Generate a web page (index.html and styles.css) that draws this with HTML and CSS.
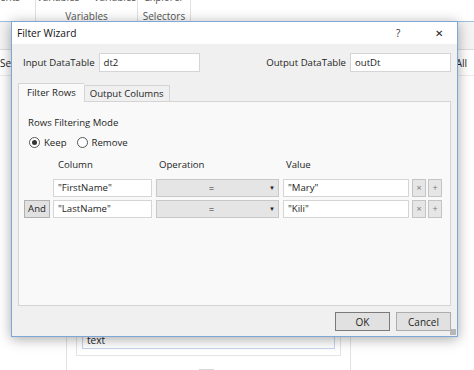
FILE: index.html
```html
<!DOCTYPE html>
<html lang="en">
<head>
    <meta charset="UTF-8">
    <title>Filter Wizard</title>
    <link rel="stylesheet" href="styles.css">
</head>
<body>
    <div class="app">
        <div class="ribbon">
            <div class="group g1"><span class="cut">ents</span></div>
            <div class="group g2">
                <div class="pair"><span class="cut">Variables</span><span class="cut">Variables</span></div>
                <span>Variables</span>
            </div>
            <div class="group g3">
                <span class="cut">Explorer</span>
                <span>Selectors</span>
            </div>
            <div class="group g4"></div>
        </div>
        <div class="toolbar"></div>
        <div class="subbar">
            <span>Se</span>
            <span>All</span>
        </div>
        <div class="main">
            <div class="side"></div>
            <div class="content">
                <div class="prop-box">
                    <div class="prop-input">text</div>
                </div>
                <div class="scroll-thumb"></div>
            </div>
            <div class="side-right"></div>
        </div>
    </div>

    <div class="dialog">
        <div class="titlebar">
            <span class="title">Filter Wizard</span>
            <span class="help">?</span>
            <span class="close">&#x2715;</span>
        </div>
        <div class="dialog-body">
            <div class="tables">
                <div class="field">
                    <label>Input DataTable</label>
                    <div class="textbox">dt2</div>
                </div>
                <div class="field">
                    <label>Output DataTable</label>
                    <div class="textbox">outDt</div>
                </div>
            </div>

            <div class="tabs">
                <div class="tab active">Filter Rows</div>
                <div class="tab">Output Columns</div>
            </div>
            <div class="tab-panel">
                <div class="mode-title">Rows Filtering Mode</div>
                <div class="radios">
                    <span class="radio checked"></span><span class="radio-label">Keep</span>
                    <span class="radio"></span><span class="radio-label">Remove</span>
                </div>

                <div class="row head">
                    <div class="c-and"></div>
                    <div class="c-col">Column</div>
                    <div class="c-op">Operation</div>
                    <div class="c-val">Value</div>
                </div>
                <div class="row">
                    <div class="c-and"></div>
                    <div class="c-col textbox">"FirstName"</div>
                    <div class="c-op combo"><span>=</span><span class="arrow">&#9660;</span></div>
                    <div class="c-val textbox">"Mary"</div>
                    <div class="mini">&#xd7;</div>
                    <div class="mini">+</div>
                </div>
                <div class="row">
                    <div class="c-and btn-and">And</div>
                    <div class="c-col textbox">"LastName"</div>
                    <div class="c-op combo"><span>=</span><span class="arrow">&#9660;</span></div>
                    <div class="c-val textbox">"Kili"</div>
                    <div class="mini">&#xd7;</div>
                    <div class="mini">+</div>
                </div>
            </div>

            <div class="actions">
                <button class="default">OK</button>
                <button>Cancel</button>
                <span class="grip"></span>
            </div>
        </div>
    </div>
</body>
</html>
```

FILE: styles.css
```css
body {
    margin: 0;
    width: 474px;
    height: 370px;
    overflow: hidden;
    position: relative;
    background: #ffffff;
    font-family: "Open Sans", "Noto Sans", sans-serif;
    font-size: 9.6px;
    color: #1e1e1e;
}

/* background application */
.app {
    display: flex;
    flex-direction: column;
    height: 370px;
}

.ribbon {
    display: flex;
    flex-shrink: 0;
    height: 21px;
    border-bottom: 1px solid #9fc0e0;
    color: #555;
    font-size: 10px;
}

.group {
    display: flex;
    flex-direction: column;
    align-items: center;
    border-right: 1px solid #e0e0e0;
    line-height: 14px;
}

.cut {
    margin-top: -10px;
}

.group > span:last-child {
    margin-top: 5px;
}

.group > .cut:last-child {
    margin-top: -10px;
}

.g1 { width: 35px; align-items: flex-start; }
.g2 { width: 101px; }
.g2 .pair { display: flex; gap: 14px; }
.g3 { width: 52px; }
.g4 { flex: 1; border-right: none; }

.toolbar {
    flex-shrink: 0;
    height: 27px;
    background: #f4f4f4;
    border-bottom: 1px solid #dcdcdc;
}

.subbar {
    flex-shrink: 0;
    height: 25px;
    display: flex;
    justify-content: space-between;
    align-items: center;
    padding-right: 7px;
    border-bottom: 1px solid #ececec;
    font-size: 10px;
}

.main {
    flex: 1;
    min-height: 0;
    display: flex;
    overflow: hidden;
}

.side {
    width: 66px;
    border-right: 1px solid #e2e2e2;
}

.content {
    width: 283px;
}

.prop-box {
    margin: 225px 9px 0 9px;
    height: 48px;
    border: 1px solid #e4e4e4;
    border-top: none;
    padding: 0 5px 6px 5px;
    display: flex;
    flex-direction: column;
    justify-content: flex-end;
}

.prop-input {
    height: 16px;
    border: 1px solid #c5d5ee;
    background: #fff;
    padding-left: 4px;
    line-height: 16px;
    font-size: 10px;
}

.scroll-thumb {
    width: 15px;
    height: 4px;
    background: #d6d6d6;
    margin: 13px 0 0 132px;
}

.side-right {
    border-left: 1px solid #e2e2e2;
    flex: 1;
}

/* dialog window */
.dialog {
    position: absolute;
    left: 11px;
    top: 21px;
    width: 445px;
    height: 314px;
    border: 1px solid #7ea6d6;
    background: #f0f0f0;
    box-shadow: 0 2px 12px rgba(0, 0, 0, 0.35);
    display: flex;
    flex-direction: column;
}

.titlebar {
    height: 23px;
    background: #ffffff;
    display: flex;
    align-items: center;
    padding-left: 5px;
    font-size: 10.2px;
    color: #111;
}

.title {
    flex: 1;
}

.help {
    width: 12px;
    margin-right: 27px;
    font-size: 10px;
    color: #333;
}

.close {
    width: 12px;
    margin-right: 10px;
    font-size: 10px;
    color: #222;
}

.dialog-body {
    flex: 1;
    display: flex;
    flex-direction: column;
    padding: 9px 6px 5px 6px;
}

.tables {
    display: flex;
    justify-content: space-between;
    padding-left: 5px;
}

.field {
    display: flex;
    align-items: center;
}

.field label {
    margin-right: 4px;
    font-size: 9.6px;
}

.textbox {
    box-sizing: border-box;
    height: 19px;
    background: #ffffff;
    border: 1px solid #d5d5d5;
    padding-left: 4px;
    line-height: 17px;
}

.tables .textbox {
    width: 101px;
}

.tabs {
    display: flex;
    align-items: flex-end;
    margin-top: 11px;
    height: 18px;
}

.tab {
    box-sizing: border-box;
    height: 16px;
    padding: 0 5px;
    border: 1px solid #d4d4d4;
    border-bottom: none;
    background: #f0f0f0;
    line-height: 15px;
}

.tab.active {
    height: 19px;
    margin-bottom: -1px;
    padding: 0 8px;
    background: #f9f9f9;
    border-right: none;
    position: relative;
    line-height: 17px;
}

.tab-panel {
    box-sizing: border-box;
    height: 205px;
    background: #f9f9f9;
    border: 1px solid #d4d4d4;
    padding: 14px 0 0 5px;
}

.mode-title {
    padding-left: 4px;
    line-height: 14px;
}

.radios {
    display: flex;
    align-items: center;
    margin-top: 5px;
    padding-left: 5px;
    height: 15px;
}

.radio {
    box-sizing: border-box;
    width: 11px;
    height: 11px;
    border: 1px solid #555;
    border-radius: 50%;
    background: #fff;
    margin-right: 4px;
    position: relative;
}

.radio.checked::after {
    content: "";
    position: absolute;
    left: 2px;
    top: 2px;
    width: 5px;
    height: 5px;
    border-radius: 50%;
    background: #333;
}

.radio-label {
    margin-right: 10px;
}

.row {
    display: flex;
    align-items: center;
    height: 18px;
    margin-bottom: 3px;
}

.row.head {
    margin-top: 8px;
    height: 14px;
    margin-bottom: 7px;
}

.c-and {
    box-sizing: border-box;
    width: 26px;
    height: 18px;
    margin-right: 3px;
}

.btn-and {
    background: #e1e1e1;
    border: 1px solid #b0b0b0;
    text-align: center;
    line-height: 16px;
}

.c-col {
    width: 99px;
    height: 18px;
    margin-right: 4px;
}

.c-op {
    box-sizing: border-box;
    width: 123px;
    height: 18px;
    margin-right: 4px;
}

.c-val {
    width: 126px;
    height: 18px;
    margin-right: 3px;
}

.head .c-col { padding-left: 5px; }
.head .c-op { padding-left: 3px; }
.head .c-val { padding-left: 3px; }
.head div { height: 14px; line-height: 14px; box-sizing: border-box; }

.row .textbox {
    line-height: 16px;
}

.combo {
    background: #e5e5e5;
    border: 1px solid #c8c8c8;
    display: flex;
    align-items: center;
    justify-content: center;
    padding-right: 12px;
    position: relative;
    color: #333;
}

.arrow {
    position: absolute;
    right: 3px;
    font-size: 6px;
    color: #222;
}

.mini {
    box-sizing: border-box;
    width: 14px;
    height: 18px;
    margin-right: 2px;
    background: #e6e6e6;
    border: 1px solid #c4c4c4;
    color: #777;
    text-align: center;
    line-height: 15px;
    font-size: 9px;
}

.actions {
    display: flex;
    justify-content: flex-end;
    align-items: center;
    margin-top: 6px;
    position: relative;
}

button {
    box-sizing: border-box;
    width: 55px;
    height: 19px;
    margin-left: 6px;
    padding: 0;
    background: #e1e1e1;
    border: 1px solid #adadad;
    font-family: "Open Sans", "Noto Sans", sans-serif;
    font-size: 10px;
    color: #1e1e1e;
}

button.default {
    border-color: #7a7a7a;
}

.grip {
    position: absolute;
    right: -5px;
    bottom: -4px;
    width: 6px;
    height: 6px;
    background: radial-gradient(circle, #b5b5b5 0.7px, transparent 1px) 0 0 / 2px 2px;
}
```
